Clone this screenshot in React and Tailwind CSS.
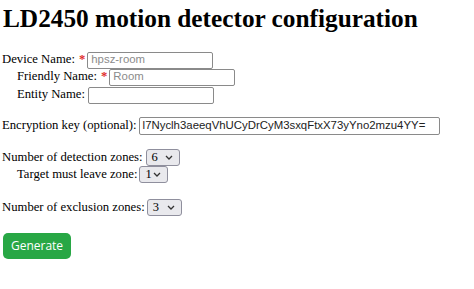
import React from 'react';

const Chevron = () => (
  <svg width="8" height="5" viewBox="0 0 8 5" className="ml-auto">
    <path d="M1 1l3 3 3-3" fill="none" stroke="#333" strokeWidth="1.3" />
  </svg>
);

const Select = ({ value, width }) => (
  <div className={`flex items-center h-[17px] ${width} bg-[#e9e9ed] border border-[#8f8f9d] rounded-[3px] pl-[5px] pr-[6px] text-[12.5px] leading-none`}>
    <span>{value}</span>
    <Chevron />
  </div>
);

const Field = ({ placeholder, value, width = 'w-[126px]', height = 'h-[17px]' }) => (
  <div className={`flex items-center ${width} ${height} border border-[#8a8a8a] rounded-[2px] px-[3px] bg-white text-[11.4px] leading-none font-['Liberation_Sans',sans-serif] overflow-hidden whitespace-nowrap`}>
    {value ? <span className="text-[#222]">{value}</span> : <span className="text-[#8b8b8b]">{placeholder}</span>}
  </div>
);

const Star = () => <span className="text-[#e02b2b] font-bold ml-[4px]">*</span>;

export default function App() {
  return (
    <div className="min-h-screen bg-white text-black font-['Liberation_Serif',serif] text-[12.7px] pl-[2px]">
      <h1 className="font-bold text-[25.3px] leading-[26px] mt-[5px] pl-[1px] whitespace-nowrap">
        LD2450 motion detector configuration
      </h1>

      {/* device names */}
      <div className="mt-[20px] flex items-center h-[17px] pt-[1px]">
        <span>Device Name:</span>
        <Star />
        <span className="ml-[2px]"><Field placeholder="hpsz-room" /></span>
      </div>
      <div className="flex items-center h-[17px] pl-[15px] pt-[1px]">
        <span>Friendly Name:</span>
        <Star />
        <span className="ml-[2px]"><Field placeholder="Room" /></span>
      </div>
      <div className="mt-[1px] flex items-center h-[17px] pl-[15px] pt-[1px]">
        <span>Entity Name:</span>
        <span className="ml-[3px]"><Field /></span>
      </div>

      {/* encryption */}
      <div className="mt-[14px] flex items-center h-[18px]">
        <span>Encryption key (optional):</span>
        <span className="ml-[2px]">
          <Field width="w-[301px]" height="h-[18px]" value="l7Nyclh3aeeqVhUCyDrCyM3sxqFtxX73yYno2mzu4YY=" />
        </span>
      </div>

      {/* zones */}
      <div className="mt-[14px] flex items-center h-[17px]">
        <span>Number of detection zones:</span>
        <span className="ml-[3px]"><Select value="6" width="w-[34px]" /></span>
      </div>
      <div className="flex items-center h-[17px] pl-[15px]">
        <span>Target must leave zone:</span>
        <span className="ml-[2px]"><Select value="1" width="w-[29px]" /></span>
      </div>

      <div className="mt-[16px] flex items-center h-[17px]">
        <span>Number of exclusion zones:</span>
        <span className="ml-[2px]"><Select value="3" width="w-[35px]" /></span>
      </div>

      <button className="mt-[17px] ml-[1px] w-[68px] h-[26px] rounded-[5px] bg-[#28a745] text-white text-[12px] font-['Open_Sans',sans-serif] flex items-center justify-center">
        Generate
      </button>
    </div>
  );
}
